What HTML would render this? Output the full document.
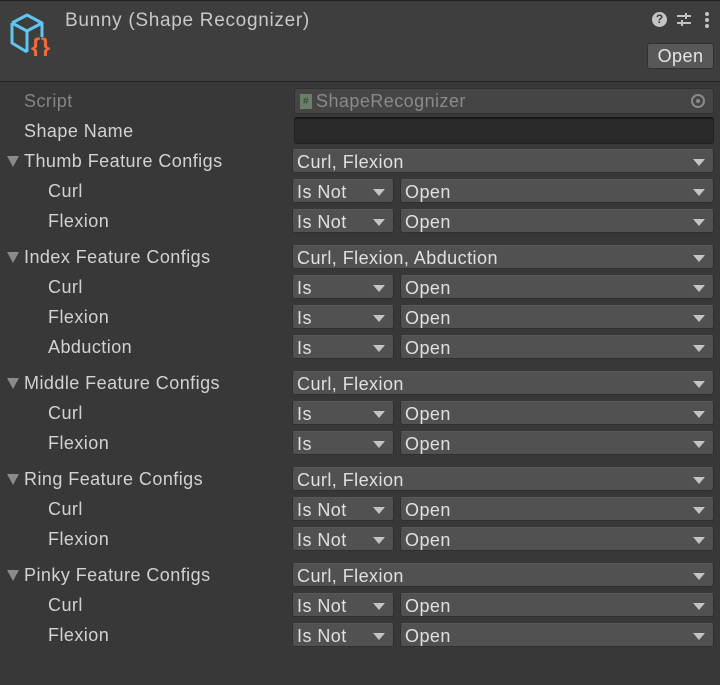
<!DOCTYPE html>
<html><head><meta charset="utf-8"><style>
*{margin:0;padding:0;box-sizing:border-box}
body{width:720px;height:685px;background:#383838;font-family:"Liberation Sans",sans-serif;font-size:18px;letter-spacing:0.45px;color:#d2d2d2;position:relative;overflow:hidden}
.hdr{position:absolute;left:0;top:0;width:720px;height:82px;background:#3e3e3e;border-top:1px solid #232323;border-bottom:1px solid #232323}
.a{position:absolute}
.l{position:absolute;height:24px;line-height:25px;white-space:nowrap}
.f{position:absolute;height:24px;line-height:24px;background:#515151;border:1px solid #2f2f2f;border-top-color:#585858;border-radius:3px;padding-left:4px;white-space:nowrap;color:#e0e0e0}
.f:after{content:"";position:absolute;right:8px;top:9px;border-left:6px solid transparent;border-right:6px solid transparent;border-top:7px solid #c4c4c4}
.tri{position:absolute;left:7px;width:0;height:0;border-left:6px solid transparent;border-right:6px solid transparent;border-top:11px solid #8a8a8a}
</style></head><body>
<div class="hdr"></div>
<svg class="a" style="left:8px;top:10px" width="50" height="46" viewBox="0 0 50 46">
<path d="M4 13 L19 5 L34 13 L34 27 M4 13 L4 33 L19 42 M4 13 L19 21 L34 13 M19 21 L19 42" fill="none" stroke="#5fc6f2" stroke-width="3" stroke-linejoin="round"/>
<text x="23" y="45" font-family="Liberation Sans,sans-serif" font-weight="bold" font-size="24" fill="#ef6b3a">{}</text>
</svg>
<div class="l" style="left:65px;top:8px;font-size:19px;letter-spacing:0.7px;color:#c8c8c8">Bunny (Shape Recognizer)</div>
<div class="a" style="left:652px;top:12px;width:15px;height:15px;border-radius:50%;background:#c4c4c4;color:#3e3e3e;font-size:12px;letter-spacing:0;font-weight:bold;text-align:center;line-height:15px">?</div>
<svg class="a" style="left:676px;top:11px" width="16" height="17"><path d="M1 5H15M1 12H15M10 2V8M6 9V15" stroke="#c4c4c4" stroke-width="2"/></svg>
<svg class="a" style="left:704px;top:11px" width="6" height="18"><circle cx="3" cy="3" r="2" fill="#c4c4c4"/><circle cx="3" cy="9" r="2" fill="#c4c4c4"/><circle cx="3" cy="15" r="2" fill="#c4c4c4"/></svg>
<div class="a" style="left:647px;top:43px;width:67px;height:26px;background:#585858;border:1px solid #303030;border-radius:3px;text-align:center;line-height:24px;color:#e6e6e6">Open</div>

<div class="l" style="left:24px;top:89px;color:#858585">Script</div>
<div class="a" style="left:294px;top:88px;width:420px;height:26px;background:#454545;border:1px solid #303030;border-radius:3px"></div>
<div class="a" style="left:300px;top:94px;width:12px;height:15px;background:#6a7f6a;color:#2e3e2e;font-size:10px;line-height:15px;text-align:center">#</div>
<div class="l" style="left:316px;top:89px;color:#8a8a8a">ShapeRecognizer</div>
<div class="a" style="left:691px;top:94px;width:14px;height:14px;border:2px solid #8a8a8a;border-radius:50%"><div style="margin:3px;width:4px;height:4px;background:#8a8a8a;border-radius:50%"></div></div>
<div class="l" style="left:24px;top:119px">Shape Name</div>
<div class="a" style="left:294px;top:117px;width:420px;height:27px;background:#2a2a2a;border:1px solid #212121;border-top:2px solid #1a1a1a;border-radius:3px"></div>

<div class="tri" style="top:156px"></div><div class="l" style="left:24px;top:149px">Thumb Feature Configs</div>
<div class="f" style="left:292px;top:149px;width:422px">Curl, Flexion</div>
<div class="l" style="left:48px;top:179px">Curl</div><div class="f" style="left:292px;top:179px;width:102px">Is Not</div><div class="f" style="left:400px;top:179px;width:314px">Open</div>
<div class="l" style="left:48px;top:209px">Flexion</div><div class="f" style="left:292px;top:209px;width:102px">Is Not</div><div class="f" style="left:400px;top:209px;width:314px">Open</div>

<div class="tri" style="top:252px"></div><div class="l" style="left:24px;top:245px">Index Feature Configs</div>
<div class="f" style="left:292px;top:245px;width:422px">Curl, Flexion, Abduction</div>
<div class="l" style="left:48px;top:275px">Curl</div><div class="f" style="left:292px;top:275px;width:102px">Is</div><div class="f" style="left:400px;top:275px;width:314px">Open</div>
<div class="l" style="left:48px;top:305px">Flexion</div><div class="f" style="left:292px;top:305px;width:102px">Is</div><div class="f" style="left:400px;top:305px;width:314px">Open</div>
<div class="l" style="left:48px;top:335px">Abduction</div><div class="f" style="left:292px;top:335px;width:102px">Is</div><div class="f" style="left:400px;top:335px;width:314px">Open</div>

<div class="tri" style="top:378px"></div><div class="l" style="left:24px;top:371px">Middle Feature Configs</div>
<div class="f" style="left:292px;top:371px;width:422px">Curl, Flexion</div>
<div class="l" style="left:48px;top:401px">Curl</div><div class="f" style="left:292px;top:401px;width:102px">Is</div><div class="f" style="left:400px;top:401px;width:314px">Open</div>
<div class="l" style="left:48px;top:431px">Flexion</div><div class="f" style="left:292px;top:431px;width:102px">Is</div><div class="f" style="left:400px;top:431px;width:314px">Open</div>

<div class="tri" style="top:474px"></div><div class="l" style="left:24px;top:467px">Ring Feature Configs</div>
<div class="f" style="left:292px;top:467px;width:422px">Curl, Flexion</div>
<div class="l" style="left:48px;top:497px">Curl</div><div class="f" style="left:292px;top:497px;width:102px">Is Not</div><div class="f" style="left:400px;top:497px;width:314px">Open</div>
<div class="l" style="left:48px;top:527px">Flexion</div><div class="f" style="left:292px;top:527px;width:102px">Is Not</div><div class="f" style="left:400px;top:527px;width:314px">Open</div>

<div class="tri" style="top:570px"></div><div class="l" style="left:24px;top:563px">Pinky Feature Configs</div>
<div class="f" style="left:292px;top:563px;width:422px">Curl, Flexion</div>
<div class="l" style="left:48px;top:593px">Curl</div><div class="f" style="left:292px;top:593px;width:102px">Is Not</div><div class="f" style="left:400px;top:593px;width:314px">Open</div>
<div class="l" style="left:48px;top:623px">Flexion</div><div class="f" style="left:292px;top:623px;width:102px">Is Not</div><div class="f" style="left:400px;top:623px;width:314px">Open</div>
</body></html>
